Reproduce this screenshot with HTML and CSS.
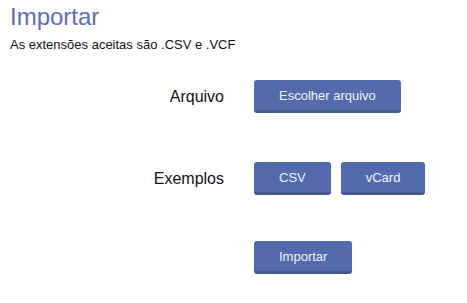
FILE: index.html
```html
<!DOCTYPE html>
<html>
<head>
    <link rel="stylesheet" href="styles.css">
</head>
<body>
    <div class="import-page">
        <h1>Importar</h1>
        <p class="subtitle">As extensões aceitas são .CSV e .VCF</p>

        <div class="form">
            <div class="row row-file">
                <div class="label">Arquivo</div>
                <div class="controls">
                    <button class="button">Escolher arquivo</button>
                </div>
            </div>
            <div class="row row-examples">
                <div class="label">Exemplos</div>
                <div class="controls">
                    <button class="button">CSV</button>
                    <button class="button">vCard</button>
                </div>
            </div>
            <div class="row row-submit">
                <div class="label"></div>
                <div class="controls">
                    <button class="button">Importar</button>
                </div>
            </div>
        </div>
    </div>
</body>
</html>
```

FILE: styles.css
```css
body {
    font-family: "Liberation Sans", Arial, sans-serif;
    background-color: #fff;
    margin: 0;
    padding: 0;
    color: #111;
}

.import-page {
    padding: 3px 0 0 10px;
}

h1 {
    font-size: 24px;
    line-height: 28px;
    font-weight: normal;
    color: #5a6fb6;
    margin: 0;
}

.subtitle {
    font-size: 13px;
    line-height: 15px;
    margin: 6px 0 0 0;
}

.form {
    margin-top: 28px;
}

.row {
    display: flex;
    align-items: center;
    height: 33px;
}

.row-examples {
    margin-top: 49px;
}

.row-submit {
    margin-top: 46px;
}

.label {
    width: 214px;
    margin-right: 30px;
    text-align: right;
    font-size: 16px;
}

.controls {
    display: flex;
    gap: 10px;
}

.button {
    font-family: "Liberation Sans", Arial, sans-serif;
    font-size: 13px;
    height: 33px;
    padding: 0 25px;
    background-color: #536bad;
    color: #f0f3fa;
    border: none;
    border-bottom: 3px solid #45598f;
    border-radius: 3px;
    cursor: pointer;
}

.button:hover {
    background-color: #48609f;
}
```
